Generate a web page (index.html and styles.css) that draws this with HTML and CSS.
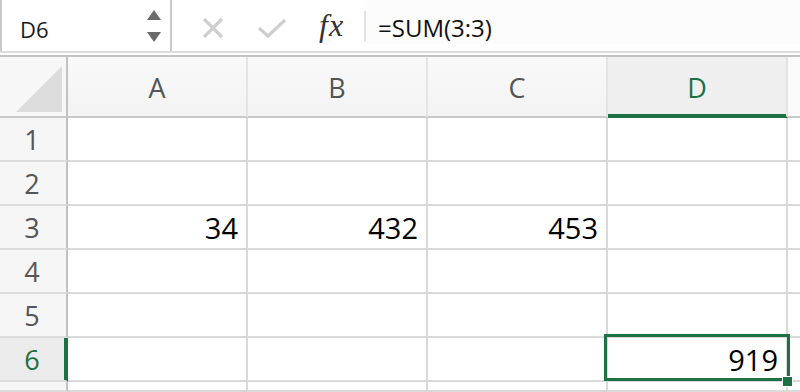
FILE: index.html
```html
<!DOCTYPE html>
<html lang="en">
<head>
    <meta charset="UTF-8">
    <meta name="viewport" content="width=device-width, initial-scale=1.0">
    <title>Sheet - SUM</title>
    <link rel="stylesheet" href="styles.css">
</head>
<body>

    <div class="toolbar">
        <div class="namebox">
            <span class="cellref">D6</span>
            <div class="spin">
                <svg width="14" height="10" viewBox="0 0 14 10"><polygon points="7,0 14,10 0,10" fill="#6b6b6b"/></svg>
                <svg width="14" height="10" viewBox="0 0 14 10"><polygon points="0,0 14,0 7,10" fill="#6b6b6b"/></svg>
            </div>
        </div>
        <div class="actions">
            <svg class="icon-x" width="24" height="24" viewBox="0 0 24 24">
                <path d="M3 3 L21 21 M21 3 L3 21" stroke="#cfcfcf" stroke-width="3.2" fill="none"/>
            </svg>
            <svg class="icon-ok" width="30" height="22" viewBox="0 0 30 22">
                <path d="M2 11 L11 19 L28 3" stroke="#cfcfcf" stroke-width="3.2" fill="none"/>
            </svg>
            <span class="fx">fx</span>
        </div>
        <div class="sep"></div>
        <div class="formula">=SUM(3:3)</div>
    </div>

    <div class="sheet">
        <div class="grid">
            <div class="corner"><div class="tri"></div></div>
            <div class="colhead">A</div>
            <div class="colhead">B</div>
            <div class="colhead">C</div>
            <div class="colhead active">D</div>
            <div class="colhead rest"></div>

            <div class="rowhead">1</div>
            <div class="cell"></div><div class="cell"></div><div class="cell"></div><div class="cell"></div><div class="cell rest"></div>

            <div class="rowhead">2</div>
            <div class="cell"></div><div class="cell"></div><div class="cell"></div><div class="cell"></div><div class="cell rest"></div>

            <div class="rowhead">3</div>
            <div class="cell">34</div><div class="cell">432</div><div class="cell">453</div><div class="cell"></div><div class="cell rest"></div>

            <div class="rowhead">4</div>
            <div class="cell"></div><div class="cell"></div><div class="cell"></div><div class="cell"></div><div class="cell rest"></div>

            <div class="rowhead">5</div>
            <div class="cell"></div><div class="cell"></div><div class="cell"></div><div class="cell"></div><div class="cell rest"></div>

            <div class="rowhead active">6</div>
            <div class="cell"></div><div class="cell"></div><div class="cell"></div><div class="cell">919</div><div class="cell rest"></div>

            <div class="rowhead"></div>
            <div class="cell"></div><div class="cell"></div><div class="cell"></div><div class="cell"></div><div class="cell rest"></div>
        </div>

        <!-- celda seleccionada D6 -->
        <div class="selection"><div class="handle"></div></div>
    </div>

</body>
</html>
```

FILE: styles.css
```css
body {
    margin: 0;
    width: 800px;
    height: 392px;
    overflow: hidden;
    background: #fff;
    font-family: "Open Sans", "Noto Sans", sans-serif;
    color: #000;
}

/* Barra de fórmulas */
.toolbar {
    height: 51px;
    display: flex;
    align-items: stretch;
    border-bottom: 2px solid #dcdcdc;
    margin-bottom: 2px;
}

.namebox {
    box-sizing: content-box;
    border-left: 2px solid #c9c9c9;
    border-right: 2px solid #c9c9c9;
    display: flex;
    align-items: center;
    justify-content: space-between;
    padding: 0 9px 0 18px;
    width: 141px;
}

.cellref {
    font-size: 22px;
    color: #1a1a1a;
    margin-top: 7px;
}

.spin {
    display: flex;
    flex-direction: column;
    gap: 12px;
}

.actions {
    display: flex;
    align-items: center;
    padding-left: 29px;
    width: 163px;
}

.icon-x {
    margin-top: 4px;
}

.icon-ok {
    margin-left: 32px;
    margin-top: 4px;
}

.fx {
    font-family: "Liberation Serif", "DejaVu Serif", serif;
    font-style: italic;
    font-size: 32px;
    color: #333;
    margin-left: 32px;
    letter-spacing: 1px;
}

.sep {
    width: 2px;
    background: #e2e2e2;
    margin: 11px 0 9px;
}

.formula {
    flex: 1;
    font-size: 24px;
    padding-left: 12px;
    padding-top: 11px;
    background: #fcfcfc;
    margin-bottom: 7px;
    color: #111;
}

/* Hoja */
.sheet {
    position: relative;
    border-top: 2px solid #c3c3c3;
}

.grid {
    display: grid;
    grid-template-columns: 68px repeat(4, 180px) 1fr;
    grid-template-rows: 61px repeat(6, 44px) 10px;
}

.grid > div {
    box-sizing: border-box;
}

.corner {
    background: #f7f7f7;
    border-right: 2px solid #c2c2c2;
    border-bottom: 2px solid #c8c8c8;
    position: relative;
}

.tri {
    position: absolute;
    left: 16px;
    top: 9px;
    width: 46px;
    height: 46px;
    background: #dcdcdc;
    clip-path: polygon(100% 0, 100% 100%, 0 100%);
}

.colhead {
    background: linear-gradient(#f9f9f9, #f3f3f3);
    border-right: 2px solid #e4e4e4;
    border-bottom: 2px solid #c8c8c8;
    display: flex;
    align-items: center;
    justify-content: center;
    font-size: 27px;
    color: #555;
    padding-top: 2px;
}

.colhead.active {
    background: #efefef;
    color: #1e7145;
    border-bottom-color: #1e7145;
    box-shadow: inset 0 -2px 0 #1e7145;
}

.colhead.rest {
    border-right: none;
    background: #fafafa;
}

.rowhead {
    background: #f6f6f6;
    border-right: 2px solid #c2c2c2;
    border-bottom: 2px solid #dcdcdc;
    display: flex;
    align-items: center;
    justify-content: center;
    font-size: 27px;
    color: #555;
    padding-right: 2px;
}

.rowhead.active {
    background: #ebebeb;
    color: #1e7145;
    border-right-color: #1e7145;
    box-shadow: inset -2px 0 0 #1e7145;
}

.cell {
    border-right: 2px solid #d9d9d9;
    border-bottom: 2px solid #d9d9d9;
    display: flex;
    align-items: center;
    justify-content: flex-end;
    padding-right: 8px;
    font-size: 29px;
    color: #000;
}

.cell.rest {
    border-right: none;
}

/* Selección */
.selection {
    position: absolute;
    left: 604px;
    top: 277px;
    width: 186px;
    height: 47px;
    box-sizing: border-box;
    border: 3px solid #1e7145;
}

.handle {
    position: absolute;
    right: -6px;
    bottom: -9px;
    width: 9px;
    height: 9px;
    background: #1e7145;
    border: 1px solid #fff;
}
```
